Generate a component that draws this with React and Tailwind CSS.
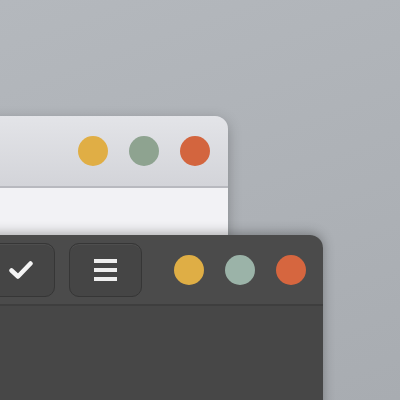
function Dot({ color }) {
  return <div className={`w-[30px] h-[30px] rounded-full ${color}`} />;
}

function Check() {
  return (
    <svg width="24" height="20" viewBox="0 0 24 20">
      <path d="M2.5 10.5 L9 16.5 L21.5 3.5" fill="none" stroke="#f4f4f4" strokeWidth="4.5" strokeLinecap="round" strokeLinejoin="round" />
    </svg>
  );
}

function Burger() {
  return (
    <div className="flex flex-col gap-[5px] w-[23px]">
      <div className="h-[4px] bg-[#eeeeee]" />
      <div className="h-[4px] bg-[#eeeeee]" />
      <div className="h-[4px] bg-[#eeeeee]" />
    </div>
  );
}

export default function App() {
  return (
    <div className="relative w-[400px] h-[400px] overflow-hidden bg-[linear-gradient(160deg,#b4b8bd_0%,#aeb2b7_50%,#a8acb1_100%)]">
      {/* light window */}
      <div className="absolute left-[-60px] top-[116px] w-[288px] h-[200px] rounded-tr-[13px] overflow-hidden shadow-[0_4px_14px_rgba(0,0,0,0.25)]">
        <div className="h-[72px] bg-[linear-gradient(180deg,#e3e4e8,#d3d4d9)] border-b-[2px] border-[#b8b9bf] flex items-center justify-end gap-[21px] pr-[18px]">
          <Dot color="bg-[#e0ae45]" />
          <Dot color="bg-[#8ea390]" />
          <Dot color="bg-[#d3653e]" />
        </div>
        <div className="h-full bg-[#f2f2f5]" />
      </div>

      {/* dark window */}
      <div className="absolute left-[-60px] top-[235px] w-[383px] h-[200px] rounded-tr-[13px] overflow-hidden shadow-[0_-2px_12px_rgba(0,0,0,0.3)]">
        <div className="h-[71px] bg-[#4b4b4b] border-b-[2px] border-[#3e3e3e] flex items-center pl-[42px]">
          <div className="w-[73px] h-[54px] rounded-[10px] bg-[#454545] border border-[#363636] shadow-[inset_0_1px_0_rgba(255,255,255,0.05)] flex items-center justify-center pl-[4px]">
            <Check />
          </div>
          <div className="ml-[14px] w-[73px] h-[54px] rounded-[10px] bg-[#454545] border border-[#363636] shadow-[inset_0_1px_0_rgba(255,255,255,0.05)] flex items-center justify-center">
            <Burger />
          </div>
          <div className="ml-[32px] flex items-center gap-[21px]">
            <Dot color="bg-[#dfae45]" />
            <Dot color="bg-[#9bb3a8]" />
            <Dot color="bg-[#d6663f]" />
          </div>
        </div>
        <div className="h-full bg-[#474747]" />
      </div>
    </div>
  );
}
